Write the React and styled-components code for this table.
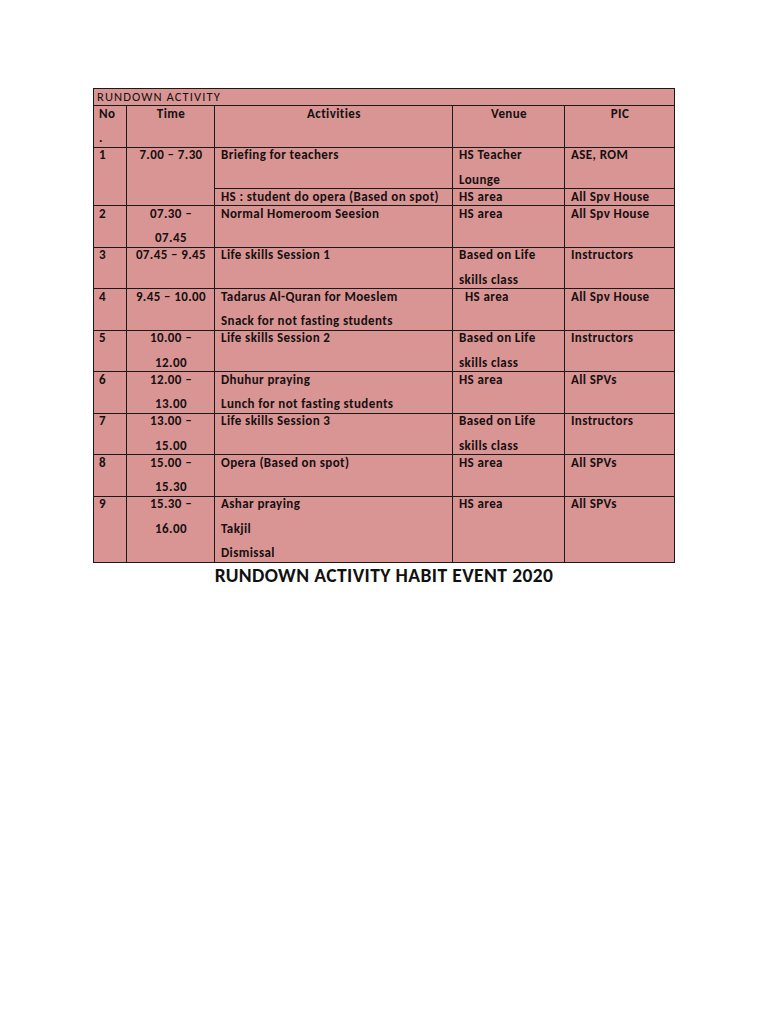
import React from "react";
import styled, { createGlobalStyle } from "styled-components";

const GlobalStyle = createGlobalStyle`
  html, body {
    margin: 0;
    padding: 0;
    background: #ffffff;
  }
  body {
    font-family: Carlito, Lato, "Liberation Sans", sans-serif;
    color: #111;
  }
`;

const Page = styled.div`
  display: flex;
  flex-direction: column;
  align-items: center;
  padding-top: 88px;
  min-height: 1024px;
  box-sizing: border-box;
`;

const Table = styled.table`
  width: 581px;
  table-layout: fixed;
  border-collapse: collapse;
  background-color: #d99594;
  border: 1px solid #1a1a1a;
`;

const Cell = styled.td`
  border: 1px solid #1a1a1a;
  padding: 0 4px 0 ${(p) => p.$indent || 5}px;
  vertical-align: top;
  text-align: ${(p) => p.$align || "left"};
  font-size: 13px;
  font-weight: 700;
  letter-spacing: 0.4px;
  white-space: nowrap;
  color: #161010;
`;

const Lines = styled.div`
  line-height: 24.5px;
  margin: -4.25px 0;
`;

const CaptionCell = styled.td`
  border: 1px solid #1a1a1a;
  padding: 0 3px;
  font-size: 12.5px;
  font-weight: 400;
  letter-spacing: 1.1px;
  line-height: 16px;
  color: #161010;
`;

const Title = styled.h1`
  margin: 1px 0 0;
  font-size: 19.5px;
  font-weight: 700;
  line-height: 22px;
  color: #111;
  letter-spacing: 0.4px;
`;

const rows = [
  { no: "1", time: ["7.00 – 7.30"], act: ["Briefing for teachers"], venue: ["HS Teacher", "Lounge"], pic: ["ASE, ROM"],
    sub: { act: ["HS : student do opera (Based on spot)"], venue: ["HS area"], pic: ["All Spv House"] } },
  { no: "2", time: ["07.30 –", "07.45"], act: ["Normal Homeroom Seesion"], venue: ["HS area"], pic: ["All Spv House"] },
  { no: "3", time: ["07.45 – 9.45"], act: ["Life skills Session 1"], venue: ["Based on Life", "skills class"], pic: ["Instructors"] },
  { no: "4", time: ["9.45 – 10.00"], act: ["Tadarus Al-Quran for Moeslem", "Snack for not fasting students"], venue: ["HS area"], venueIndent: 12, pic: ["All Spv House"] },
  { no: "5", time: ["10.00 –", "12.00"], act: ["Life skills Session 2"], venue: ["Based on Life", "skills class"], pic: ["Instructors"] },
  { no: "6", time: ["12.00 –", "13.00"], act: ["Dhuhur praying", "Lunch for not fasting students"], venue: ["HS area"], pic: ["All SPVs"] },
  { no: "7", time: ["13.00 –", "15.00"], act: ["Life skills Session 3"], venue: ["Based on Life", "skills class"], pic: ["Instructors"] },
  { no: "8", time: ["15.00 –", "15.30"], act: ["Opera (Based on spot)"], venue: ["HS area"], pic: ["All SPVs"] },
  { no: "9", time: ["15.30 –", "16.00"], act: ["Ashar praying", "Takjil", "Dismissal"], venue: ["HS area"], pic: ["All SPVs"] },
];

const Text = ({ lines }) => (
  <Lines>
    {lines.map((l, i) => (
      <div key={i}>{l}</div>
    ))}
  </Lines>
);

const App = () => {
  return (
    <>
      <GlobalStyle />
      <Page>
        <Table>
          <colgroup>
            <col style={{ width: 33 }} />
            <col style={{ width: 88 }} />
            <col style={{ width: 238 }} />
            <col style={{ width: 112 }} />
            <col style={{ width: 110 }} />
          </colgroup>
          <tbody>
            <tr>
              <CaptionCell colSpan={5}>RUNDOWN ACTIVITY</CaptionCell>
            </tr>
            <tr>
              <Cell><Text lines={["No", "."]} /></Cell>
              <Cell $align="center"><Text lines={["Time"]} /></Cell>
              <Cell $align="center"><Text lines={["Activities"]} /></Cell>
              <Cell $align="center"><Text lines={["Venue"]} /></Cell>
              <Cell $align="center"><Text lines={["PIC"]} /></Cell>
            </tr>
            {rows.map((r) => (
              <React.Fragment key={r.no}>
                <tr>
                  <Cell rowSpan={r.sub ? 2 : 1}><Text lines={[r.no]} /></Cell>
                  <Cell rowSpan={r.sub ? 2 : 1} $align="center"><Text lines={r.time} /></Cell>
                  <Cell $indent={6}><Text lines={r.act} /></Cell>
                  <Cell $indent={r.venueIndent || 6}><Text lines={r.venue} /></Cell>
                  <Cell $indent={6}><Text lines={r.pic} /></Cell>
                </tr>
                {r.sub && (
                  <tr>
                    <Cell $indent={6}><Text lines={r.sub.act} /></Cell>
                    <Cell $indent={6}><Text lines={r.sub.venue} /></Cell>
                    <Cell $indent={6}><Text lines={r.sub.pic} /></Cell>
                  </tr>
                )}
              </React.Fragment>
            ))}
          </tbody>
        </Table>
        <Title>RUNDOWN ACTIVITY HABIT EVENT 2020</Title>
      </Page>
    </>
  );
};

export default App;
